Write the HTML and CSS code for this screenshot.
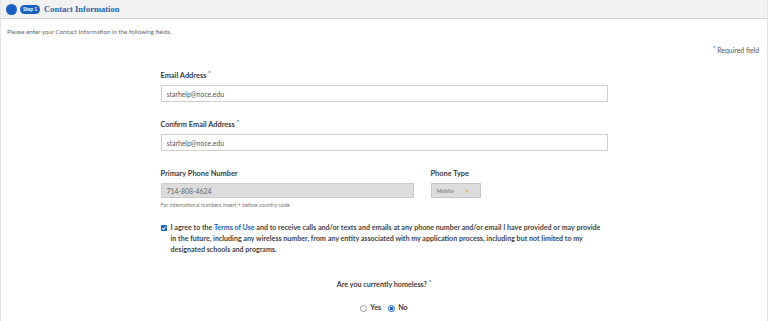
FILE: index.html
```html
<!DOCTYPE html>
<html lang="en">
<head>
    <meta charset="UTF-8">
    <meta name="viewport" content="width=device-width, initial-scale=1.0">
    <title>Contact Information</title>
    <link rel="stylesheet" href="styles.css">
</head>
<body>
    <div class="page">
        <div class="step-header">
            <span class="step-dot"></span>
            <span class="step-pill">Step 1</span>
            <span class="step-title">Contact Information</span>
        </div>

        <p class="intro">Please enter your Contact Information in the following fields.</p>
        <p class="required-note"><span class="star">*</span> Required field</p>

        <div class="form">
            <div class="field">
                <label for="email">Email Address <span class="star">*</span></label>
                <input type="text" id="email" class="text-input" value="starhelp@noce.edu">
            </div>

            <div class="field">
                <label for="email2">Confirm Email Address <span class="star">*</span></label>
                <input type="text" id="email2" class="text-input" value="starhelp@noce.edu">
            </div>

            <div class="phone-row">
                <div class="field phone-field">
                    <label for="phone">Primary Phone Number</label>
                    <input type="text" id="phone" class="text-input disabled" value="714-808-4624" disabled>
                    <div class="hint">For international numbers insert + before country code</div>
                </div>
                <div class="field type-field">
                    <label>Phone Type</label>
                    <div class="select">
                        <span>Mobile</span>
                        <span class="caret">&#9662;</span>
                    </div>
                </div>
            </div>

            <div class="consent">
                <span class="checkbox">
                    <svg viewBox="0 0 8 8" width="6" height="6"><path d="M1.5 4.2 L3.3 6 L6.6 2" fill="none" stroke="#fff" stroke-width="1.4"/></svg>
                </span>
                <p>I agree to the <a href="#">Terms of Use</a> and to receive calls and/or texts and emails at any phone number and/or email I have provided or may provide in the future, including any wireless number, from any entity associated with my application process, including but not limited to my designated schools and programs.</p>
            </div>

            <div class="question">
                <div class="question-label">Are you currently homeless? <span class="star">*</span></div>
                <div class="radios">
                    <label class="radio"><span class="radio-dot"></span>Yes</label>
                    <label class="radio"><span class="radio-dot checked"></span>No</label>
                </div>
            </div>
        </div>
    </div>
</body>
</html>
```

FILE: styles.css
```css
body {
    margin: 0;
    padding: 0;
    background: #fff;
    font-family: Lato, "Open Sans", sans-serif;
    color: #3b3b3b;
}

.page {
    height: 321px;
    border-left: 1px solid #e4e4e4;
    border-right: 1px solid #e4e4e4;
    box-sizing: border-box;
}

.step-header {
    height: 18px;
    display: flex;
    align-items: center;
    padding-left: 5px;
    background: #f2f2f2;
    border-bottom: 1px solid #d4d4d4;
}

.step-dot {
    width: 11px;
    height: 11px;
    border-radius: 50%;
    background: #1a5fc0;
    margin-right: 3px;
}

.step-pill {
    height: 9px;
    line-height: 9px;
    padding: 0 3px;
    border-radius: 5px;
    background: #1a5fc0;
    color: #fff;
    font-size: 5px;
    font-weight: bold;
    margin-right: 4px;
}

.step-title {
    font-family: "Liberation Serif", serif;
    font-weight: bold;
    font-size: 8.5px;
    color: #2a62b0;
}

.intro {
    margin: 0;
    padding: 8px 0 0 6px;
    font-size: 6.2px;
    line-height: 10px;
    color: #666;
}

.required-note {
    margin: 8px 0 0;
    padding-right: 8px;
    text-align: right;
    font-size: 6.9px;
    line-height: 10px;
    color: #555;
}

.star {
    position: relative;
    top: -3px;
    color: #1a5fc0;
    font-weight: bold;
    font-size: 6px;
    line-height: 0;
}

.form {
    width: 447px;
    margin: 16px auto 0;
}

.field {
    margin-bottom: 18px;
}

.field label {
    display: block;
    font-size: 7.4px;
    font-weight: bold;
    line-height: 10px;
    margin-bottom: 4px;
    color: #3b3b3b;
}

.text-input {
    display: block;
    width: 100%;
    height: 17px;
    box-sizing: border-box;
    border: 1px solid #cfcfcf;
    padding: 0 5px;
    font-family: Lato, sans-serif;
    font-size: 6.9px;
    color: #555;
    background: #fff;
}

.text-input.disabled {
    height: 15px;
    background: #dcdcdc;
    border-color: #cbcbcb;
    color: #666;
}

.phone-row {
    display: flex;
    gap: 17px;
}

.phone-field {
    width: 253px;
    margin-bottom: 0;
}

.type-field {
    margin-bottom: 0;
}

.hint {
    margin-top: 4px;
    font-size: 5.4px;
    line-height: 6px;
    color: #777;
}

.select {
    width: 50px;
    height: 15px;
    box-sizing: border-box;
    border: 1px solid #c6c6c6;
    background: #dcdcdc;
    display: flex;
    align-items: center;
    justify-content: space-between;
    padding: 0 11px 0 5px;
    font-size: 5.5px;
    font-weight: bold;
    color: #8a8a8a;
}

.caret {
    color: #f0b04a;
    font-size: 5px;
}

.consent {
    display: flex;
    margin-top: 14px;
}

.checkbox {
    flex: none;
    width: 6px;
    height: 6px;
    margin: 3px 4px 0 0;
    border-radius: 1px;
    background: #1a5fc0;
    display: flex;
    align-items: center;
    justify-content: center;
}

.consent p {
    margin: 0;
    font-size: 7.1px;
    font-weight: bold;
    line-height: 11px;
    color: #444;
}

.consent a {
    color: #1a5fc0;
    text-decoration: none;
}

.question {
    margin-top: 25px;
    text-align: center;
}

.question-label {
    font-size: 7.2px;
    font-weight: bold;
    line-height: 10px;
    color: #3b3b3b;
}

.radios {
    margin-top: 13px;
    display: flex;
    justify-content: center;
    gap: 7px;
    line-height: 10px;
}

.radio {
    display: flex;
    align-items: center;
    font-size: 7.2px;
    font-weight: bold;
    color: #3b3b3b;
}

.radio-dot {
    width: 5px;
    height: 5px;
    border: 1px solid #9a9a9a;
    border-radius: 50%;
    margin-right: 3px;
    background: #fff;
}

.radio-dot.checked {
    border-color: #1a5fc0;
    background: radial-gradient(circle, #1a5fc0 1.4px, #fff 1.8px);
}
```
